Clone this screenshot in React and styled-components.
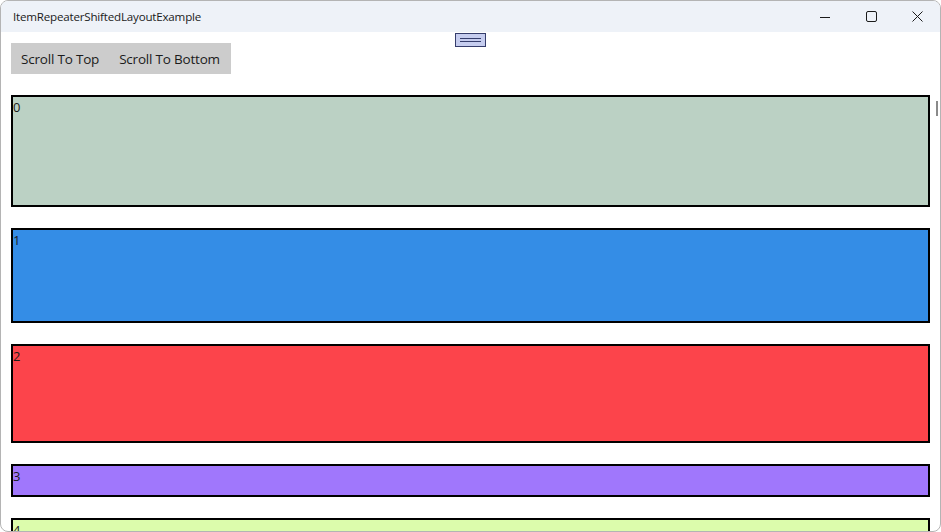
import React from "react";
import styled, { createGlobalStyle } from "styled-components";

const Global = createGlobalStyle`
  html, body { margin: 0; padding: 0; background: #ffffff; }
  body { font-family: "Segoe UI", "Open Sans", "Noto Sans", sans-serif; }
  * { box-sizing: border-box; }
`;

const Window = styled.div`
  width: 941px;
  height: 532px;
  border: 1px solid #b4b4b4;
  border-radius: 8px;
  overflow: hidden;
  background: #ffffff;
  display: flex;
  flex-direction: column;
  position: relative;
`;

const TitleBar = styled.div`
  height: 31px;
  flex: none;
  background: #eef2f8;
  display: flex;
  align-items: center;
  padding-left: 12px;
`;

const Title = styled.div`
  flex: 1;
  font-family: "Open Sans", sans-serif;
  font-size: 11.6px;
  letter-spacing: -0.2px;
  color: #1b1b1b;
  padding-bottom: 1px;
`;

const Caption = styled.button`
  width: 46px;
  height: 31px;
  border: none;
  background: transparent;
  display: flex;
  align-items: center;
  justify-content: center;
  padding: 0;
  color: #1b1b1b;
`;

const Grip = styled.div`
  position: absolute;
  left: 454px;
  top: 32px;
  width: 31px;
  height: 14px;
  border: 1px solid #353d6c;
  background: #c6cdef;
  display: flex;
  flex-direction: column;
  justify-content: center;
  align-items: center;
  gap: 2px;
`;

const GripLine = styled.div`
  width: 21px;
  height: 1px;
  background: #353d6c;
`;

const Content = styled.div`
  flex: 1;
  display: flex;
  flex-direction: column;
  padding: 11px 0 0 10px;
  overflow: hidden;
  position: relative;
`;

const Toolbar = styled.div`
  display: flex;
  background: #cccccc;
  align-self: flex-start;
  height: 31px;
`;

const ToolButton = styled.button`
  border: none;
  background: transparent;
  font-family: "Open Sans", sans-serif;
  font-size: 13.5px;
  letter-spacing: -0.2px;
  color: #1b1b1b;
  padding: 0 ${(p) => p.$pr || 10}px 0 10px;
  height: 31px;
  display: flex;
  align-items: center;
`;

const List = styled.div`
  display: flex;
  flex-direction: column;
  gap: 21px;
  margin-top: 21px;
  width: 919px;
`;

const Item = styled.div`
  flex: none;
  height: ${(p) => p.$h}px;
  background: ${(p) => p.$bg};
  border: 2px solid #000000;
  font-family: "Open Sans", sans-serif;
  font-size: 13px;
  line-height: 18px;
  color: #1a1a1a;
  padding: 1px 0 0 0;
`;

const ScrollThumb = styled.div`
  position: absolute;
  right: 2px;
  top: 69px;
  width: 2px;
  height: 15px;
  background: #8a8a8a;
`;

const items = [
  { h: 112, bg: "#bbd1c4" },
  { h: 95, bg: "#348de6" },
  { h: 99, bg: "#fc444b" },
  { h: 33, bg: "#a077fc" },
  { h: 60, bg: "#dcfcac" },
];

export default function App() {
  return (
    <>
      <Global />
      <Window>
        <TitleBar>
          <Title>ItemRepeaterShiftedLayoutExample</Title>
          <Caption aria-label="Minimize">
            <svg width="10" height="10" viewBox="0 0 10 10">
              <path d="M0 5.5h10" stroke="#1b1b1b" strokeWidth="1" />
            </svg>
          </Caption>
          <Caption aria-label="Maximize">
            <svg width="11" height="11" viewBox="0 0 11 11">
              <rect x="0.5" y="0.5" width="10" height="10" rx="1.5" fill="none" stroke="#1b1b1b" strokeWidth="1" />
            </svg>
          </Caption>
          <Caption aria-label="Close">
            <svg width="11" height="11" viewBox="0 0 11 11">
              <path d="M0.5 0.5L10.5 10.5M10.5 0.5L0.5 10.5" stroke="#1b1b1b" strokeWidth="1" />
            </svg>
          </Caption>
        </TitleBar>
        <Grip>
          <GripLine />
          <GripLine />
        </Grip>
        <Content>
          <Toolbar>
            <ToolButton>Scroll To Top</ToolButton>
            <ToolButton $pr={11}>Scroll To Bottom</ToolButton>
          </Toolbar>
          <List>
            {items.map((it, i) => (
              <Item key={i} $h={it.h} $bg={it.bg}>
                {i}
              </Item>
            ))}
          </List>
          <ScrollThumb />
        </Content>
      </Window>
    </>
  );
}
